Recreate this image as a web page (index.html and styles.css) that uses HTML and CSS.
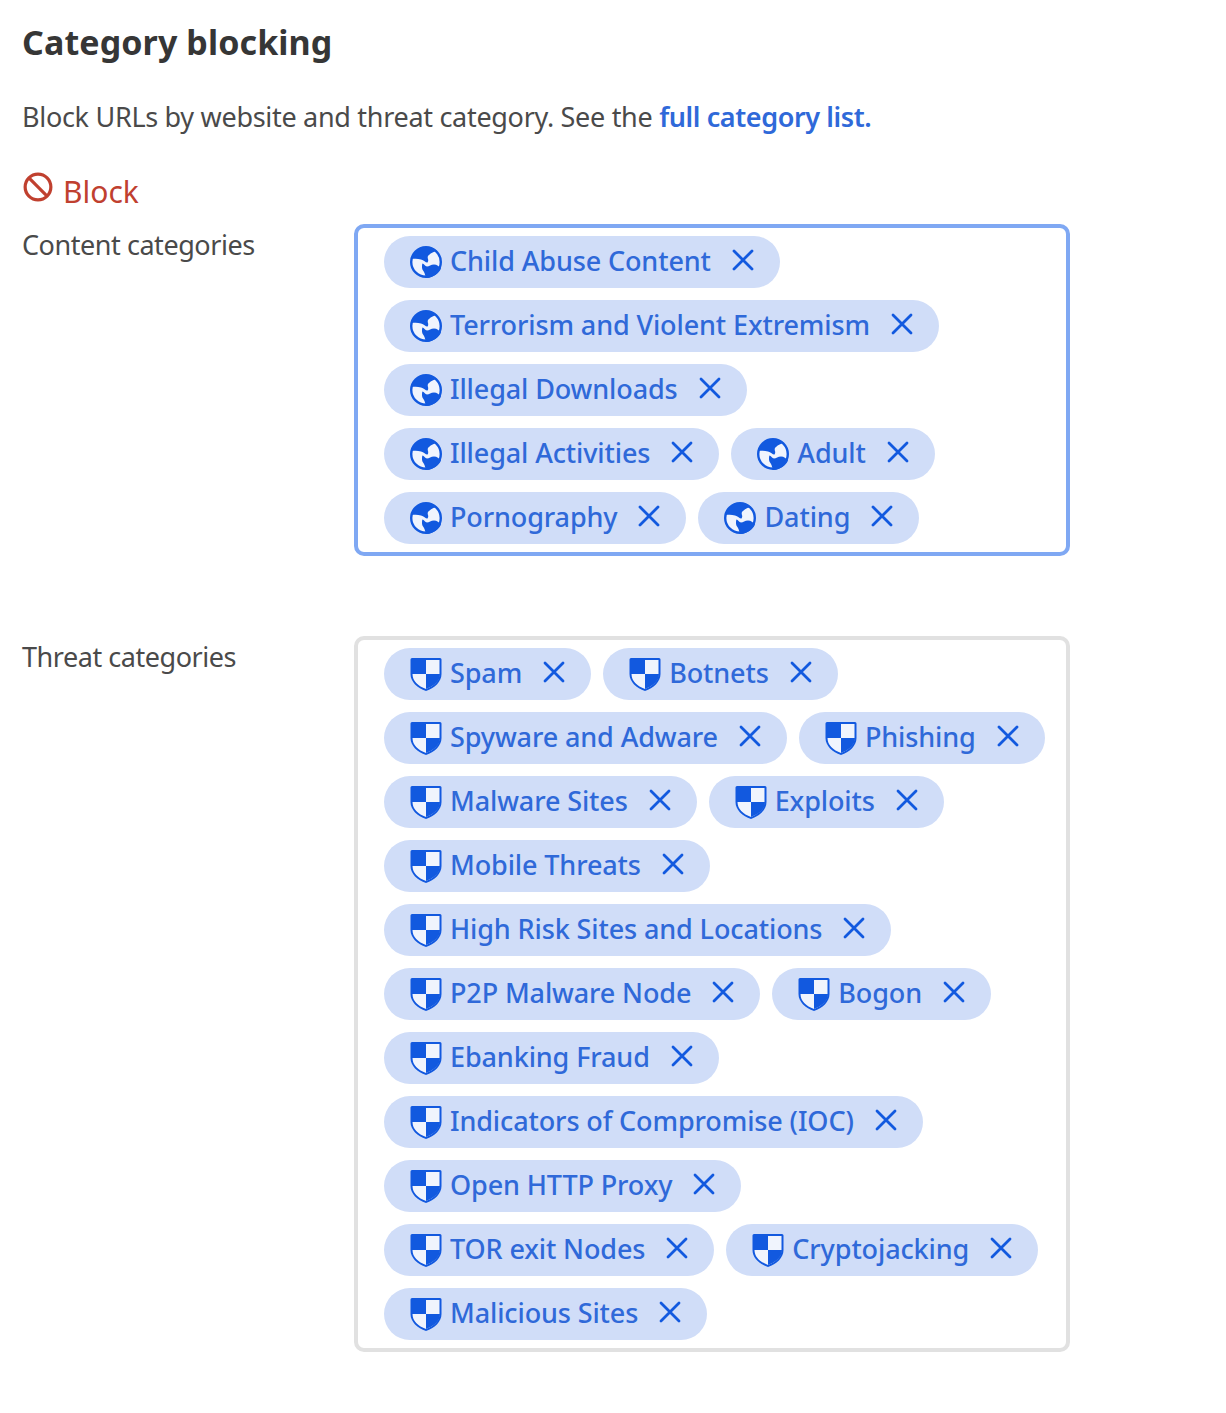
FILE: index.html
```html
<!DOCTYPE html>
<html lang="en">
<head>
<meta charset="utf-8">
<title>Category blocking</title>
<link rel="stylesheet" href="styles.css">
</head>
<body>
<svg class="defs" width="0" height="0" aria-hidden="true">
  <symbol id="globe" viewBox="0 0 32 32">
    <circle cx="16" cy="16" r="14.800" fill="#f0f4fd" stroke="currentColor" stroke-width="2.400"/>
    <path fill="currentColor" d="M1.500 13C3 5 10 1 16 1c4 0 8 1 11 4-3 .5-6 2-8 4-1.500 1-1.500 2.500-1 4 .5 1.500 0 3-.5 3.500-1.500.5-3.500-2.500-6.500-3-3-1-6-1-9.500-.5z"/>
    <path fill="currentColor" d="M12.500 17.500c1.500 0 2.500 3 4.500 3 2 0 4-2 7-2 3 0 5 2 7 4-2 5-8 9-15 9.500-.5-2-1-3-1.500-5-.5-2-2.500-3-2.500-5.500 0-1.500 0-3 .5-4z"/>
  </symbol>
  <symbol id="shield" viewBox="0 0 32 34">
    <path fill="#f0f4fd" d="M2 2h28v15c0 7-6 12-14 15C8 29 2 24 2 17z"/>
    <path fill="currentColor" d="M2 1h28a1.500 1.500 0 0 1 1.500 1.500V17c0 8-7 14-15.500 17C7.500 31 .5 25 .5 17V2.500A1.500 1.500 0 0 1 2 1zm.5 2V17c0 7 5.500 12 13.500 15 8-3 13.500-8 13.500-15V3z"/>
    <path fill="currentColor" d="M2 2h14v15H2zM16 17h14c0 7-6 12-14 15z"/>
  </symbol>
  <symbol id="close" viewBox="0 0 24 24">
    <path fill="none" stroke="currentColor" stroke-width="2.800" stroke-linecap="round" d="M3 3l18 18M21 3L3 21"/>
  </symbol>
</svg>
<main class="page">
  <h1 class="title">Category blocking</h1>
  <p class="intro">Block URLs by website and threat category. See the <a class="link" href="#">full category list.</a></p>
  <div class="block">
    <svg class="block-icon" viewBox="0 0 28 28" aria-hidden="true"><circle cx="14" cy="14" r="12" fill="none" stroke="currentColor" stroke-width="3"/><path d="M6 6l16 16" fill="none" stroke="currentColor" stroke-width="3"/></svg>
    <span>Block</span>
  </div>
  <section class="row">
    <div class="label">Content categories</div>
    <div class="field field-focus">
      <span class="chip"><svg class="ic"><use href="#globe"/></svg><span class="t">Child Abuse Content</span><svg class="x"><use href="#close"/></svg></span>
      <span class="chip"><svg class="ic"><use href="#globe"/></svg><span class="t">Terrorism and Violent Extremism</span><svg class="x"><use href="#close"/></svg></span>
      <span class="chip"><svg class="ic"><use href="#globe"/></svg><span class="t">Illegal Downloads</span><svg class="x"><use href="#close"/></svg></span>
      <span class="chip"><svg class="ic"><use href="#globe"/></svg><span class="t">Illegal Activities</span><svg class="x"><use href="#close"/></svg></span>
      <span class="chip"><svg class="ic"><use href="#globe"/></svg><span class="t">Adult</span><svg class="x"><use href="#close"/></svg></span>
      <span class="chip"><svg class="ic"><use href="#globe"/></svg><span class="t">Pornography</span><svg class="x"><use href="#close"/></svg></span>
      <span class="chip"><svg class="ic"><use href="#globe"/></svg><span class="t">Dating</span><svg class="x"><use href="#close"/></svg></span>
    </div>
  </section>
  <section class="row row-threat">
    <div class="label">Threat categories</div>
    <div class="field">
      <span class="chip"><svg class="ic"><use href="#shield"/></svg><span class="t">Spam</span><svg class="x"><use href="#close"/></svg></span>
      <span class="chip"><svg class="ic"><use href="#shield"/></svg><span class="t">Botnets</span><svg class="x"><use href="#close"/></svg></span>
      <span class="chip"><svg class="ic"><use href="#shield"/></svg><span class="t">Spyware and Adware</span><svg class="x"><use href="#close"/></svg></span>
      <span class="chip"><svg class="ic"><use href="#shield"/></svg><span class="t">Phishing</span><svg class="x"><use href="#close"/></svg></span>
      <span class="chip"><svg class="ic"><use href="#shield"/></svg><span class="t">Malware Sites</span><svg class="x"><use href="#close"/></svg></span>
      <span class="chip"><svg class="ic"><use href="#shield"/></svg><span class="t">Exploits</span><svg class="x"><use href="#close"/></svg></span>
      <span class="chip"><svg class="ic"><use href="#shield"/></svg><span class="t">Mobile Threats</span><svg class="x"><use href="#close"/></svg></span>
      <span class="chip"><svg class="ic"><use href="#shield"/></svg><span class="t">High Risk Sites and Locations</span><svg class="x"><use href="#close"/></svg></span>
      <span class="chip"><svg class="ic"><use href="#shield"/></svg><span class="t">P2P Malware Node</span><svg class="x"><use href="#close"/></svg></span>
      <span class="chip"><svg class="ic"><use href="#shield"/></svg><span class="t">Bogon</span><svg class="x"><use href="#close"/></svg></span>
      <span class="chip"><svg class="ic"><use href="#shield"/></svg><span class="t">Ebanking Fraud</span><svg class="x"><use href="#close"/></svg></span>
      <span class="chip"><svg class="ic"><use href="#shield"/></svg><span class="t">Indicators of Compromise (IOC)</span><svg class="x"><use href="#close"/></svg></span>
      <span class="chip"><svg class="ic"><use href="#shield"/></svg><span class="t">Open HTTP Proxy</span><svg class="x"><use href="#close"/></svg></span>
      <span class="chip"><svg class="ic"><use href="#shield"/></svg><span class="t">TOR exit Nodes</span><svg class="x"><use href="#close"/></svg></span>
      <span class="chip"><svg class="ic"><use href="#shield"/></svg><span class="t">Cryptojacking</span><svg class="x"><use href="#close"/></svg></span>
      <span class="chip"><svg class="ic"><use href="#shield"/></svg><span class="t">Malicious Sites</span><svg class="x"><use href="#close"/></svg></span>
    </div>
  </section>
</main>
</body>
</html>
```
FILE: styles.css
```css
* { box-sizing: border-box; }
html, body { margin: 0; background: #fff; }
body {
  font-family: "Noto Sans", "Open Sans", sans-serif;
  color: #4a4a4a;
  font-size: 27px;
}
.defs { position: absolute; }
.page { padding: 0 0 60px 22px; width: 1226px; height: 1413px; overflow: hidden; }
.title {
  margin: 0;
  padding-top: 19px;
  font-size: 34px;
  line-height: 46px;
  font-weight: 700;
  color: #363636;
  letter-spacing: 0.1px;
}
.intro {
  margin: 0;
  padding-top: 32px;
  line-height: 40px;
  letter-spacing: -0.3px;
}
.link { color: #2f69d9; text-decoration: none; font-weight: 600; letter-spacing: -0.4px; }
.block {
  display: flex;
  align-items: center;
  gap: 10px;
  height: 46px;
  margin-top: 31px;
  color: #c0402f;
  font-size: 30px;
}
.block-icon { width: 30px; height: 30px; margin: -8px 0 0 1px; }
.row { display: grid; grid-template-columns: 332px 716px; margin-top: 10px; }
.row-threat { margin-top: 80px; }
.label { padding-top: 1px; line-height: 40px; letter-spacing: -0.45px; }
.field {
  display: flex;
  flex-wrap: wrap;
  align-content: flex-start;
  gap: 12px;
  padding: 8px 16px 8px 26px;
  border: 4px solid #e1e1e1;
  border-radius: 10px;
}
.field-focus { border-color: #7fa8f3; }
.chip {
  display: inline-flex;
  align-items: center;
  height: 52px;
  padding: 0 26px;
  border-radius: 26px;
  background: #d0ddf8;
  color: #1259df;
}
.ic { width: 32px; height: 34px; flex: none; margin-right: 8px; }
.t { color: #2f69d9; line-height: 40px; margin-top: -2px; font-weight: 500; letter-spacing: -0.12px; }
.x { width: 24px; height: 24px; flex: none; margin-left: 20px; margin-right: -1px; margin-top: -4px; }
```
